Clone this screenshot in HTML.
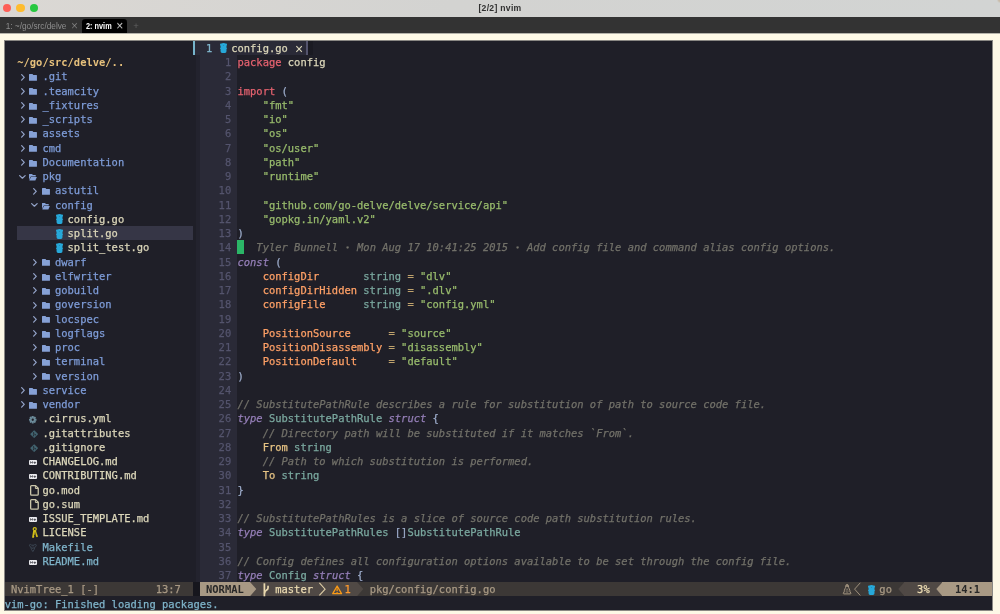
<!DOCTYPE html>
<html lang="en"><head><meta charset="utf-8"><title>[2/2] nvim</title>
<style>
html,body{margin:0;padding:0}
body{width:1000px;height:614px;overflow:hidden;position:relative;background:#fdf8e6;font-family:"Liberation Sans",sans-serif}
#titlebar{will-change:transform;position:absolute;left:0;top:0;width:1000px;height:17px;background:linear-gradient(90deg,#dbd8d4 0%,#d3d3d1 45%,#d2d4d3 100%)}
#title{position:absolute;left:0;right:0;top:2.6px;text-align:center;font-size:8.6px;font-weight:bold;color:#303030;line-height:11px;letter-spacing:0.3px}
#corner{position:absolute;right:0;top:0;width:4px;height:6px;background:radial-gradient(circle at 100% 0,#c9bba8 0,#c9bba8 1.2px,rgba(214,212,208,0) 3.2px)}
.light{position:absolute;top:3.6px;width:8.2px;height:8.2px;border-radius:50%}
#tabbar{will-change:transform;position:absolute;left:0;top:17px;width:1000px;height:16px;background:#333333;font-size:9px;line-height:16px;white-space:pre}
#tabbar span{position:absolute}
.tt{top:1.5px;font-size:8.25px}
.tx{top:1.1px;font-size:12px;margin-left:0.45px;font-weight:normal;-webkit-text-stroke:0.2px #333}
.tp{top:1.3px;font-size:9.6px;margin-left:0.3px}
#tab2{position:absolute;left:82px;top:2.2px;width:45.2px;height:13.8px;background:#000;border-radius:3.2px 3.2px 0 0}
#term{will-change:transform;position:absolute;left:4px;top:40px;width:989px;height:571px;box-sizing:border-box;border:1px solid #8a8884;background:#1f1f28;overflow:hidden;
 font-family:"DejaVu Sans Mono","Liberation Mono",monospace;font-size:10.45px;letter-spacing:0.009px;color:#dcd7ba}
#grid{position:absolute;left:-0.5px;top:-0.5px;width:988px;height:570px}
#sep{position:absolute;left:191.99px;top:14.25px;width:3.09px;height:527.25px;background:#23232e}
#gutter{position:absolute;left:195.08px;top:14.25px;width:37.76px;height:527.25px;background:#2a2a37}
.r{position:absolute;left:0;width:988px;height:14.25px;line-height:14.25px;white-space:pre}
.r span{position:absolute;top:0.4px;margin-left:0.15px;-webkit-text-stroke:0.25px}
.bg{position:absolute;top:0;height:14.3px;display:block}
.i{position:absolute;overflow:visible}
.fg{color:#dcd7ba} .dir{color:#7e9cd8} .sp{color:#7fb4ca}
.r span.root{color:#e7c17c;font-weight:bold;-webkit-text-stroke:0}
.ln{color:#54546d}
.pre{color:#e5626f} .br{color:#9cabca} .str{color:#98bb6c} .op{color:#c0a36e}
.kw{color:#957fb8;font-style:italic} .cm{color:#727169;font-style:italic}
.con{color:#ffa066} .ty{color:#7aa89f} .id{color:#e6c384}
.tabname{color:#dcd7ba}
.r span.bul{font-size:7px;font-style:normal;margin-left:1.2px;margin-top:0.2px}
.r span.close{font-family:"Liberation Sans",sans-serif;font-size:14px;letter-spacing:0;-webkit-text-stroke:0;margin-top:0.8px;margin-left:1.1px}
.st-a{color:#282828;font-weight:bold;-webkit-text-stroke:0 !important} .st-b{color:#ebdbb2} .st-c{color:#a89984} .st-w{color:#fe9a2e}
</style></head><body>
<div id="titlebar"><div class="light" style="left:3.1px;background:#fe5f57"></div><div class="light" style="left:16.4px;background:#febc2e"></div><div class="light" style="left:29.7px;background:#28c840"></div><div id="corner"></div><div id="title">[2/2] nvim</div></div>
<div id="tabbar"><div id="tab2"></div><span class="tt" style="left:5.7px;color:#8e8e8e">1: ~/go/src/delve</span><span class="tx" style="left:70.6px;color:#8e8e8e">×</span><span class="tt" style="left:85.9px;color:#fff;font-weight:bold;font-size:8.2px;top:1.5px;transform:scaleX(0.895);transform-origin:0 0">2: nvim</span><span class="tx" style="left:115.9px;color:#f0f0f0">×</span><span class="tp" style="left:132.9px;color:#606060">+</span></div>
<div style="position:absolute;left:0;top:33px;width:1000px;height:1px;background:#b4b2aa"></div>
<div id="term"><div id="grid"><div id="sep"></div><div id="gutter"></div>
<div class="r" style="top:0.0px"><b class="bg" style="left:188.79px;width:113.32px;background:#2a2a37"></b><b class="bg" style="left:188.49px;width:2px;background:#76b4cb"></b><span class="sp" style="left:201.38px">1 </span><svg class="i" style="left:215.06px;top:2.95px" width="7.05" height="10.10" viewBox="0 0 7 9.8" preserveAspectRatio="none"><g fill="#27a8d9"><circle cx="1" cy="1.6" r="1"/><circle cx="6" cy="1.6" r="1"/><path d="M0.55 3 Q0.5 0.1 3.5 0.05 Q6.5 0.1 6.45 3 L6.45 8 Q6.45 9.6 4.9 9.7 L2.1 9.7 Q0.55 9.6 0.55 8 Z"/><circle cx="0.5" cy="5.1" r="0.55"/><circle cx="6.5" cy="5.1" r="0.55"/></g><path d="M2.8 1.9 L4.2 1.9 L3.5 3 Z" fill="#1d86b0"/></svg><span class="tabname" style="left:226.55px">config.go </span><span class="fg close" style="left:289.48px">×</span><b class="bg" style="left:301.46px;width:1.8px;background:#54546d"></b><b class="bg" style="left:303.26px;width:5.09px;background:#1a1a22"></b></div>
<div class="r" style="top:14.25px"><span class="root" style="left:12.59px">~/go/src/delve/..</span><span class="ln" style="left:220.25px">1 </span><span class="pre" style="left:232.84px">package </span><span class="fg" style="left:283.18px">config</span></div>
<div class="r" style="top:28.5px"><svg class="i" style="left:16.09px;top:4.50px" width="4.00" height="6.70" viewBox="0 0 4 6.7" preserveAspectRatio="none"><path d="M0.65 0.6 L3.25 3.35 L0.65 6.1" fill="none" stroke="#93a3c8" stroke-width="1.25" stroke-linecap="round" stroke-linejoin="round"/></svg><svg class="i" style="left:24.87px;top:5.00px" width="7.95" height="6.85" viewBox="0 0 8 6.8" preserveAspectRatio="none"><path d="M0.4 0 H3.4 Q3.8 0 4 0.4 L4.3 1 H7.6 Q8 1 8 1.4 V6.4 Q8 6.8 7.6 6.8 H0.4 Q0 6.8 0 6.4 V0.4 Q0 0 0.4 0 Z" fill="#86a1d6"/></svg><span class="dir" style="left:37.76px">.git</span><span class="ln" style="left:220.25px">2 </span></div>
<div class="r" style="top:42.75px"><svg class="i" style="left:16.09px;top:4.50px" width="4.00" height="6.70" viewBox="0 0 4 6.7" preserveAspectRatio="none"><path d="M0.65 0.6 L3.25 3.35 L0.65 6.1" fill="none" stroke="#93a3c8" stroke-width="1.25" stroke-linecap="round" stroke-linejoin="round"/></svg><svg class="i" style="left:24.87px;top:5.00px" width="7.95" height="6.85" viewBox="0 0 8 6.8" preserveAspectRatio="none"><path d="M0.4 0 H3.4 Q3.8 0 4 0.4 L4.3 1 H7.6 Q8 1 8 1.4 V6.4 Q8 6.8 7.6 6.8 H0.4 Q0 6.8 0 6.4 V0.4 Q0 0 0.4 0 Z" fill="#86a1d6"/></svg><span class="dir" style="left:37.76px">.teamcity</span><span class="ln" style="left:220.25px">3 </span><span class="pre" style="left:232.84px">import </span><span class="br" style="left:276.89px">(</span></div>
<div class="r" style="top:57.0px"><svg class="i" style="left:16.09px;top:4.50px" width="4.00" height="6.70" viewBox="0 0 4 6.7" preserveAspectRatio="none"><path d="M0.65 0.6 L3.25 3.35 L0.65 6.1" fill="none" stroke="#93a3c8" stroke-width="1.25" stroke-linecap="round" stroke-linejoin="round"/></svg><svg class="i" style="left:24.87px;top:5.00px" width="7.95" height="6.85" viewBox="0 0 8 6.8" preserveAspectRatio="none"><path d="M0.4 0 H3.4 Q3.8 0 4 0.4 L4.3 1 H7.6 Q8 1 8 1.4 V6.4 Q8 6.8 7.6 6.8 H0.4 Q0 6.8 0 6.4 V0.4 Q0 0 0.4 0 Z" fill="#86a1d6"/></svg><span class="dir" style="left:37.76px">_fixtures</span><span class="ln" style="left:220.25px">4 </span><span class="str" style="left:258.01px">&quot;fmt&quot;</span></div>
<div class="r" style="top:71.25px"><svg class="i" style="left:16.09px;top:4.50px" width="4.00" height="6.70" viewBox="0 0 4 6.7" preserveAspectRatio="none"><path d="M0.65 0.6 L3.25 3.35 L0.65 6.1" fill="none" stroke="#93a3c8" stroke-width="1.25" stroke-linecap="round" stroke-linejoin="round"/></svg><svg class="i" style="left:24.87px;top:5.00px" width="7.95" height="6.85" viewBox="0 0 8 6.8" preserveAspectRatio="none"><path d="M0.4 0 H3.4 Q3.8 0 4 0.4 L4.3 1 H7.6 Q8 1 8 1.4 V6.4 Q8 6.8 7.6 6.8 H0.4 Q0 6.8 0 6.4 V0.4 Q0 0 0.4 0 Z" fill="#86a1d6"/></svg><span class="dir" style="left:37.76px">_scripts</span><span class="ln" style="left:220.25px">5 </span><span class="str" style="left:258.01px">&quot;io&quot;</span></div>
<div class="r" style="top:85.5px"><svg class="i" style="left:16.09px;top:4.50px" width="4.00" height="6.70" viewBox="0 0 4 6.7" preserveAspectRatio="none"><path d="M0.65 0.6 L3.25 3.35 L0.65 6.1" fill="none" stroke="#93a3c8" stroke-width="1.25" stroke-linecap="round" stroke-linejoin="round"/></svg><svg class="i" style="left:24.87px;top:5.00px" width="7.95" height="6.85" viewBox="0 0 8 6.8" preserveAspectRatio="none"><path d="M0.4 0 H3.4 Q3.8 0 4 0.4 L4.3 1 H7.6 Q8 1 8 1.4 V6.4 Q8 6.8 7.6 6.8 H0.4 Q0 6.8 0 6.4 V0.4 Q0 0 0.4 0 Z" fill="#86a1d6"/></svg><span class="dir" style="left:37.76px">assets</span><span class="ln" style="left:220.25px">6 </span><span class="str" style="left:258.01px">&quot;os&quot;</span></div>
<div class="r" style="top:99.75px"><svg class="i" style="left:16.09px;top:4.50px" width="4.00" height="6.70" viewBox="0 0 4 6.7" preserveAspectRatio="none"><path d="M0.65 0.6 L3.25 3.35 L0.65 6.1" fill="none" stroke="#93a3c8" stroke-width="1.25" stroke-linecap="round" stroke-linejoin="round"/></svg><svg class="i" style="left:24.87px;top:5.00px" width="7.95" height="6.85" viewBox="0 0 8 6.8" preserveAspectRatio="none"><path d="M0.4 0 H3.4 Q3.8 0 4 0.4 L4.3 1 H7.6 Q8 1 8 1.4 V6.4 Q8 6.8 7.6 6.8 H0.4 Q0 6.8 0 6.4 V0.4 Q0 0 0.4 0 Z" fill="#86a1d6"/></svg><span class="dir" style="left:37.76px">cmd</span><span class="ln" style="left:220.25px">7 </span><span class="str" style="left:258.01px">&quot;os/user&quot;</span></div>
<div class="r" style="top:114.0px"><svg class="i" style="left:16.09px;top:4.50px" width="4.00" height="6.70" viewBox="0 0 4 6.7" preserveAspectRatio="none"><path d="M0.65 0.6 L3.25 3.35 L0.65 6.1" fill="none" stroke="#93a3c8" stroke-width="1.25" stroke-linecap="round" stroke-linejoin="round"/></svg><svg class="i" style="left:24.87px;top:5.00px" width="7.95" height="6.85" viewBox="0 0 8 6.8" preserveAspectRatio="none"><path d="M0.4 0 H3.4 Q3.8 0 4 0.4 L4.3 1 H7.6 Q8 1 8 1.4 V6.4 Q8 6.8 7.6 6.8 H0.4 Q0 6.8 0 6.4 V0.4 Q0 0 0.4 0 Z" fill="#86a1d6"/></svg><span class="dir" style="left:37.76px">Documentation</span><span class="ln" style="left:220.25px">8 </span><span class="str" style="left:258.01px">&quot;path&quot;</span></div>
<div class="r" style="top:128.25px"><svg class="i" style="left:14.39px;top:5.80px" width="6.80" height="3.90" viewBox="0 0 6.8 3.9" preserveAspectRatio="none"><path d="M0.65 0.65 L3.4 3.2 L6.15 0.65" fill="none" stroke="#93a3c8" stroke-width="1.25" stroke-linecap="round" stroke-linejoin="round"/></svg><svg class="i" style="left:24.77px;top:5.55px" width="7.85" height="6.55" viewBox="0 0 8 6.5" preserveAspectRatio="none"><path d="M0.3 0 H3.2 L3.9 1 H6.6 Q6.9 1 6.9 1.3 V2.5 H2 Q1.6 2.5 1.4 2.9 L0 5.9 V0.3 Q0 0 0.3 0 Z" fill="#86a1d6"/><path d="M1.9 3 H8 L6.5 6.5 H0.3 Z" fill="#86a1d6"/></svg><span class="dir" style="left:37.76px">pkg</span><span class="ln" style="left:220.25px">9 </span><span class="str" style="left:258.01px">&quot;runtime&quot;</span></div>
<div class="r" style="top:142.5px"><svg class="i" style="left:28.67px;top:4.50px" width="4.00" height="6.70" viewBox="0 0 4 6.7" preserveAspectRatio="none"><path d="M0.65 0.6 L3.25 3.35 L0.65 6.1" fill="none" stroke="#93a3c8" stroke-width="1.25" stroke-linecap="round" stroke-linejoin="round"/></svg><svg class="i" style="left:37.46px;top:5.00px" width="7.95" height="6.85" viewBox="0 0 8 6.8" preserveAspectRatio="none"><path d="M0.4 0 H3.4 Q3.8 0 4 0.4 L4.3 1 H7.6 Q8 1 8 1.4 V6.4 Q8 6.8 7.6 6.8 H0.4 Q0 6.8 0 6.4 V0.4 Q0 0 0.4 0 Z" fill="#86a1d6"/></svg><span class="dir" style="left:50.34px">astutil</span><span class="ln" style="left:213.96px">10 </span></div>
<div class="r" style="top:156.75px"><svg class="i" style="left:26.97px;top:5.80px" width="6.80" height="3.90" viewBox="0 0 6.8 3.9" preserveAspectRatio="none"><path d="M0.65 0.65 L3.4 3.2 L6.15 0.65" fill="none" stroke="#93a3c8" stroke-width="1.25" stroke-linecap="round" stroke-linejoin="round"/></svg><svg class="i" style="left:37.36px;top:5.55px" width="7.85" height="6.55" viewBox="0 0 8 6.5" preserveAspectRatio="none"><path d="M0.3 0 H3.2 L3.9 1 H6.6 Q6.9 1 6.9 1.3 V2.5 H2 Q1.6 2.5 1.4 2.9 L0 5.9 V0.3 Q0 0 0.3 0 Z" fill="#86a1d6"/><path d="M1.9 3 H8 L6.5 6.5 H0.3 Z" fill="#86a1d6"/></svg><span class="dir" style="left:50.34px">config</span><span class="ln" style="left:213.96px">11 </span><span class="str" style="left:258.01px">&quot;github.com/go-delve/delve/service/api&quot;</span></div>
<div class="r" style="top:171.0px"><svg class="i" style="left:51.44px;top:2.75px" width="7.05" height="10.10" viewBox="0 0 7 9.8" preserveAspectRatio="none"><g fill="#27a8d9"><circle cx="1" cy="1.6" r="1"/><circle cx="6" cy="1.6" r="1"/><path d="M0.55 3 Q0.5 0.1 3.5 0.05 Q6.5 0.1 6.45 3 L6.45 8 Q6.45 9.6 4.9 9.7 L2.1 9.7 Q0.55 9.6 0.55 8 Z"/><circle cx="0.5" cy="5.1" r="0.55"/><circle cx="6.5" cy="5.1" r="0.55"/></g><path d="M2.8 1.9 L4.2 1.9 L3.5 3 Z" fill="#1d86b0"/></svg><span class="fg" style="left:62.93px">config.go</span><span class="ln" style="left:213.96px">12 </span><span class="str" style="left:258.01px">&quot;gopkg.in/yaml.v2&quot;</span></div>
<div class="r" style="top:185.25px"><b class="bg" style="left:12.59px;width:176.25px;background:#363646"></b><svg class="i" style="left:51.44px;top:2.75px" width="7.05" height="10.10" viewBox="0 0 7 9.8" preserveAspectRatio="none"><g fill="#27a8d9"><circle cx="1" cy="1.6" r="1"/><circle cx="6" cy="1.6" r="1"/><path d="M0.55 3 Q0.5 0.1 3.5 0.05 Q6.5 0.1 6.45 3 L6.45 8 Q6.45 9.6 4.9 9.7 L2.1 9.7 Q0.55 9.6 0.55 8 Z"/><circle cx="0.5" cy="5.1" r="0.55"/><circle cx="6.5" cy="5.1" r="0.55"/></g><path d="M2.8 1.9 L4.2 1.9 L3.5 3 Z" fill="#1d86b0"/></svg><span class="fg" style="left:62.93px">split.go</span><span class="ln" style="left:213.96px">13 </span><span class="br" style="left:232.84px">)</span></div>
<div class="r" style="top:199.5px"><svg class="i" style="left:51.44px;top:2.75px" width="7.05" height="10.10" viewBox="0 0 7 9.8" preserveAspectRatio="none"><g fill="#27a8d9"><circle cx="1" cy="1.6" r="1"/><circle cx="6" cy="1.6" r="1"/><path d="M0.55 3 Q0.5 0.1 3.5 0.05 Q6.5 0.1 6.45 3 L6.45 8 Q6.45 9.6 4.9 9.7 L2.1 9.7 Q0.55 9.6 0.55 8 Z"/><circle cx="0.5" cy="5.1" r="0.55"/><circle cx="6.5" cy="5.1" r="0.55"/></g><path d="M2.8 1.9 L4.2 1.9 L3.5 3 Z" fill="#1d86b0"/></svg><span class="fg" style="left:62.93px">split_test.go</span><span class="ln" style="left:213.96px">14 </span><span class="cm" style="left:251.72px">Tyler Bunnell </span><span class="cm bul" style="left:339.82px">•</span><span class="cm" style="left:346.11px"> Mon Aug 17 10:41:25 2015 </span><span class="cm bul" style="left:509.73px">•</span><span class="cm" style="left:516.03px"> Add config file and command alias config options.</span><b class="bg" style="left:232.84px;width:6.29px;background:#2bb667"></b></div>
<div class="r" style="top:213.75px"><svg class="i" style="left:28.67px;top:4.50px" width="4.00" height="6.70" viewBox="0 0 4 6.7" preserveAspectRatio="none"><path d="M0.65 0.6 L3.25 3.35 L0.65 6.1" fill="none" stroke="#93a3c8" stroke-width="1.25" stroke-linecap="round" stroke-linejoin="round"/></svg><svg class="i" style="left:37.46px;top:5.00px" width="7.95" height="6.85" viewBox="0 0 8 6.8" preserveAspectRatio="none"><path d="M0.4 0 H3.4 Q3.8 0 4 0.4 L4.3 1 H7.6 Q8 1 8 1.4 V6.4 Q8 6.8 7.6 6.8 H0.4 Q0 6.8 0 6.4 V0.4 Q0 0 0.4 0 Z" fill="#86a1d6"/></svg><span class="dir" style="left:50.34px">dwarf</span><span class="ln" style="left:213.96px">15 </span><span class="kw" style="left:232.84px">const </span><span class="br" style="left:270.6px">(</span></div>
<div class="r" style="top:228.0px"><svg class="i" style="left:28.67px;top:4.50px" width="4.00" height="6.70" viewBox="0 0 4 6.7" preserveAspectRatio="none"><path d="M0.65 0.6 L3.25 3.35 L0.65 6.1" fill="none" stroke="#93a3c8" stroke-width="1.25" stroke-linecap="round" stroke-linejoin="round"/></svg><svg class="i" style="left:37.46px;top:5.00px" width="7.95" height="6.85" viewBox="0 0 8 6.8" preserveAspectRatio="none"><path d="M0.4 0 H3.4 Q3.8 0 4 0.4 L4.3 1 H7.6 Q8 1 8 1.4 V6.4 Q8 6.8 7.6 6.8 H0.4 Q0 6.8 0 6.4 V0.4 Q0 0 0.4 0 Z" fill="#86a1d6"/></svg><span class="dir" style="left:50.34px">elfwriter</span><span class="ln" style="left:213.96px">16 </span><span class="con" style="left:258.01px">configDir       </span><span class="ty" style="left:358.7px">string </span><span class="op" style="left:402.75px">= </span><span class="str" style="left:415.34px">&quot;dlv&quot;</span></div>
<div class="r" style="top:242.25px"><svg class="i" style="left:28.67px;top:4.50px" width="4.00" height="6.70" viewBox="0 0 4 6.7" preserveAspectRatio="none"><path d="M0.65 0.6 L3.25 3.35 L0.65 6.1" fill="none" stroke="#93a3c8" stroke-width="1.25" stroke-linecap="round" stroke-linejoin="round"/></svg><svg class="i" style="left:37.46px;top:5.00px" width="7.95" height="6.85" viewBox="0 0 8 6.8" preserveAspectRatio="none"><path d="M0.4 0 H3.4 Q3.8 0 4 0.4 L4.3 1 H7.6 Q8 1 8 1.4 V6.4 Q8 6.8 7.6 6.8 H0.4 Q0 6.8 0 6.4 V0.4 Q0 0 0.4 0 Z" fill="#86a1d6"/></svg><span class="dir" style="left:50.34px">gobuild</span><span class="ln" style="left:213.96px">17 </span><span class="con" style="left:258.01px">configDirHidden </span><span class="ty" style="left:358.7px">string </span><span class="op" style="left:402.75px">= </span><span class="str" style="left:415.34px">&quot;.dlv&quot;</span></div>
<div class="r" style="top:256.5px"><svg class="i" style="left:28.67px;top:4.50px" width="4.00" height="6.70" viewBox="0 0 4 6.7" preserveAspectRatio="none"><path d="M0.65 0.6 L3.25 3.35 L0.65 6.1" fill="none" stroke="#93a3c8" stroke-width="1.25" stroke-linecap="round" stroke-linejoin="round"/></svg><svg class="i" style="left:37.46px;top:5.00px" width="7.95" height="6.85" viewBox="0 0 8 6.8" preserveAspectRatio="none"><path d="M0.4 0 H3.4 Q3.8 0 4 0.4 L4.3 1 H7.6 Q8 1 8 1.4 V6.4 Q8 6.8 7.6 6.8 H0.4 Q0 6.8 0 6.4 V0.4 Q0 0 0.4 0 Z" fill="#86a1d6"/></svg><span class="dir" style="left:50.34px">goversion</span><span class="ln" style="left:213.96px">18 </span><span class="con" style="left:258.01px">configFile      </span><span class="ty" style="left:358.7px">string </span><span class="op" style="left:402.75px">= </span><span class="str" style="left:415.34px">&quot;config.yml&quot;</span></div>
<div class="r" style="top:270.75px"><svg class="i" style="left:28.67px;top:4.50px" width="4.00" height="6.70" viewBox="0 0 4 6.7" preserveAspectRatio="none"><path d="M0.65 0.6 L3.25 3.35 L0.65 6.1" fill="none" stroke="#93a3c8" stroke-width="1.25" stroke-linecap="round" stroke-linejoin="round"/></svg><svg class="i" style="left:37.46px;top:5.00px" width="7.95" height="6.85" viewBox="0 0 8 6.8" preserveAspectRatio="none"><path d="M0.4 0 H3.4 Q3.8 0 4 0.4 L4.3 1 H7.6 Q8 1 8 1.4 V6.4 Q8 6.8 7.6 6.8 H0.4 Q0 6.8 0 6.4 V0.4 Q0 0 0.4 0 Z" fill="#86a1d6"/></svg><span class="dir" style="left:50.34px">locspec</span><span class="ln" style="left:213.96px">19 </span></div>
<div class="r" style="top:285.0px"><svg class="i" style="left:28.67px;top:4.50px" width="4.00" height="6.70" viewBox="0 0 4 6.7" preserveAspectRatio="none"><path d="M0.65 0.6 L3.25 3.35 L0.65 6.1" fill="none" stroke="#93a3c8" stroke-width="1.25" stroke-linecap="round" stroke-linejoin="round"/></svg><svg class="i" style="left:37.46px;top:5.00px" width="7.95" height="6.85" viewBox="0 0 8 6.8" preserveAspectRatio="none"><path d="M0.4 0 H3.4 Q3.8 0 4 0.4 L4.3 1 H7.6 Q8 1 8 1.4 V6.4 Q8 6.8 7.6 6.8 H0.4 Q0 6.8 0 6.4 V0.4 Q0 0 0.4 0 Z" fill="#86a1d6"/></svg><span class="dir" style="left:50.34px">logflags</span><span class="ln" style="left:213.96px">20 </span><span class="con" style="left:258.01px">PositionSource      </span><span class="op" style="left:383.87px">= </span><span class="str" style="left:396.46px">&quot;source&quot;</span></div>
<div class="r" style="top:299.25px"><svg class="i" style="left:28.67px;top:4.50px" width="4.00" height="6.70" viewBox="0 0 4 6.7" preserveAspectRatio="none"><path d="M0.65 0.6 L3.25 3.35 L0.65 6.1" fill="none" stroke="#93a3c8" stroke-width="1.25" stroke-linecap="round" stroke-linejoin="round"/></svg><svg class="i" style="left:37.46px;top:5.00px" width="7.95" height="6.85" viewBox="0 0 8 6.8" preserveAspectRatio="none"><path d="M0.4 0 H3.4 Q3.8 0 4 0.4 L4.3 1 H7.6 Q8 1 8 1.4 V6.4 Q8 6.8 7.6 6.8 H0.4 Q0 6.8 0 6.4 V0.4 Q0 0 0.4 0 Z" fill="#86a1d6"/></svg><span class="dir" style="left:50.34px">proc</span><span class="ln" style="left:213.96px">21 </span><span class="con" style="left:258.01px">PositionDisassembly </span><span class="op" style="left:383.87px">= </span><span class="str" style="left:396.46px">&quot;disassembly&quot;</span></div>
<div class="r" style="top:313.5px"><svg class="i" style="left:28.67px;top:4.50px" width="4.00" height="6.70" viewBox="0 0 4 6.7" preserveAspectRatio="none"><path d="M0.65 0.6 L3.25 3.35 L0.65 6.1" fill="none" stroke="#93a3c8" stroke-width="1.25" stroke-linecap="round" stroke-linejoin="round"/></svg><svg class="i" style="left:37.46px;top:5.00px" width="7.95" height="6.85" viewBox="0 0 8 6.8" preserveAspectRatio="none"><path d="M0.4 0 H3.4 Q3.8 0 4 0.4 L4.3 1 H7.6 Q8 1 8 1.4 V6.4 Q8 6.8 7.6 6.8 H0.4 Q0 6.8 0 6.4 V0.4 Q0 0 0.4 0 Z" fill="#86a1d6"/></svg><span class="dir" style="left:50.34px">terminal</span><span class="ln" style="left:213.96px">22 </span><span class="con" style="left:258.01px">PositionDefault     </span><span class="op" style="left:383.87px">= </span><span class="str" style="left:396.46px">&quot;default&quot;</span></div>
<div class="r" style="top:327.75px"><svg class="i" style="left:28.67px;top:4.50px" width="4.00" height="6.70" viewBox="0 0 4 6.7" preserveAspectRatio="none"><path d="M0.65 0.6 L3.25 3.35 L0.65 6.1" fill="none" stroke="#93a3c8" stroke-width="1.25" stroke-linecap="round" stroke-linejoin="round"/></svg><svg class="i" style="left:37.46px;top:5.00px" width="7.95" height="6.85" viewBox="0 0 8 6.8" preserveAspectRatio="none"><path d="M0.4 0 H3.4 Q3.8 0 4 0.4 L4.3 1 H7.6 Q8 1 8 1.4 V6.4 Q8 6.8 7.6 6.8 H0.4 Q0 6.8 0 6.4 V0.4 Q0 0 0.4 0 Z" fill="#86a1d6"/></svg><span class="dir" style="left:50.34px">version</span><span class="ln" style="left:213.96px">23 </span><span class="br" style="left:232.84px">)</span></div>
<div class="r" style="top:342.0px"><svg class="i" style="left:16.09px;top:4.50px" width="4.00" height="6.70" viewBox="0 0 4 6.7" preserveAspectRatio="none"><path d="M0.65 0.6 L3.25 3.35 L0.65 6.1" fill="none" stroke="#93a3c8" stroke-width="1.25" stroke-linecap="round" stroke-linejoin="round"/></svg><svg class="i" style="left:24.87px;top:5.00px" width="7.95" height="6.85" viewBox="0 0 8 6.8" preserveAspectRatio="none"><path d="M0.4 0 H3.4 Q3.8 0 4 0.4 L4.3 1 H7.6 Q8 1 8 1.4 V6.4 Q8 6.8 7.6 6.8 H0.4 Q0 6.8 0 6.4 V0.4 Q0 0 0.4 0 Z" fill="#86a1d6"/></svg><span class="dir" style="left:37.76px">service</span><span class="ln" style="left:213.96px">24 </span></div>
<div class="r" style="top:356.25px"><svg class="i" style="left:16.09px;top:4.50px" width="4.00" height="6.70" viewBox="0 0 4 6.7" preserveAspectRatio="none"><path d="M0.65 0.6 L3.25 3.35 L0.65 6.1" fill="none" stroke="#93a3c8" stroke-width="1.25" stroke-linecap="round" stroke-linejoin="round"/></svg><svg class="i" style="left:24.87px;top:5.00px" width="7.95" height="6.85" viewBox="0 0 8 6.8" preserveAspectRatio="none"><path d="M0.4 0 H3.4 Q3.8 0 4 0.4 L4.3 1 H7.6 Q8 1 8 1.4 V6.4 Q8 6.8 7.6 6.8 H0.4 Q0 6.8 0 6.4 V0.4 Q0 0 0.4 0 Z" fill="#86a1d6"/></svg><span class="dir" style="left:37.76px">vendor</span><span class="ln" style="left:213.96px">25 </span><span class="cm" style="left:232.84px">// SubstitutePathRule describes a rule for substitution of path to source code file.</span></div>
<div class="r" style="top:370.5px"><svg class="i" style="left:24.62px;top:4.85px" width="7.5" height="7.5" viewBox="-3.75 -3.75 7.5 7.5"><g fill="#6b8a99"><rect x="-0.95" y="-3.75" width="1.9" height="1.7" rx="0.25" transform="rotate(0)"/><rect x="-0.95" y="-3.75" width="1.9" height="1.7" rx="0.25" transform="rotate(45)"/><rect x="-0.95" y="-3.75" width="1.9" height="1.7" rx="0.25" transform="rotate(90)"/><rect x="-0.95" y="-3.75" width="1.9" height="1.7" rx="0.25" transform="rotate(135)"/><rect x="-0.95" y="-3.75" width="1.9" height="1.7" rx="0.25" transform="rotate(180)"/><rect x="-0.95" y="-3.75" width="1.9" height="1.7" rx="0.25" transform="rotate(225)"/><rect x="-0.95" y="-3.75" width="1.9" height="1.7" rx="0.25" transform="rotate(270)"/><rect x="-0.95" y="-3.75" width="1.9" height="1.7" rx="0.25" transform="rotate(315)"/><circle r="2.75"/></g><circle r="1.15" fill="#1f1f28"/></svg><span class="fg" style="left:37.76px">.cirrus.yml</span><span class="ln" style="left:213.96px">26 </span><span class="kw" style="left:232.84px">type </span><span class="ty" style="left:264.31px">SubstitutePathRule </span><span class="kw" style="left:383.87px">struct </span><span class="br" style="left:427.92px">{</span></div>
<div class="r" style="top:384.75px"><svg class="i" style="left:25.12px;top:4.85px" width="8.3" height="8.3" viewBox="-3.85 -3.85 7.7 7.7"><rect x="-2.65" y="-2.65" width="5.3" height="5.3" rx="0.45" transform="rotate(45)" fill="#41626e"/><path d="M-0.55 -1.3 V1.5 M-0.5 -0.5 L1.1 0.5" stroke="#1f1f28" stroke-width="0.5" fill="none"/><circle cx="-0.55" cy="1.5" r="0.55" fill="#1f1f28"/><circle cx="-0.55" cy="-1.3" r="0.55" fill="#1f1f28"/><circle cx="1.15" cy="0.55" r="0.55" fill="#1f1f28"/></svg><span class="fg" style="left:37.76px">.gitattributes</span><span class="ln" style="left:213.96px">27 </span><span class="cm" style="left:258.01px">// Directory path will be substituted if it matches `From`.</span></div>
<div class="r" style="top:399.0px"><svg class="i" style="left:25.12px;top:4.85px" width="8.3" height="8.3" viewBox="-3.85 -3.85 7.7 7.7"><rect x="-2.65" y="-2.65" width="5.3" height="5.3" rx="0.45" transform="rotate(45)" fill="#41626e"/><path d="M-0.55 -1.3 V1.5 M-0.5 -0.5 L1.1 0.5" stroke="#1f1f28" stroke-width="0.5" fill="none"/><circle cx="-0.55" cy="1.5" r="0.55" fill="#1f1f28"/><circle cx="-0.55" cy="-1.3" r="0.55" fill="#1f1f28"/><circle cx="1.15" cy="0.55" r="0.55" fill="#1f1f28"/></svg><span class="fg" style="left:37.76px">.gitignore</span><span class="ln" style="left:213.96px">28 </span><span class="id" style="left:258.01px">From </span><span class="ty" style="left:289.48px">string</span></div>
<div class="r" style="top:413.25px"><svg class="i" style="left:24.52px;top:6.20px" width="8.05" height="5.00" viewBox="0 0 8 5" preserveAspectRatio="none"><rect x="0" y="0" width="8" height="5" rx="1" fill="#ececf0"/><path d="M1.45 3.5 V1.6 L2.45 2.7 L3.45 1.6 V3.5" fill="none" stroke="#33333c" stroke-width="0.7" stroke-linejoin="round"/><path d="M5.75 1.5 V2.7 M4.75 2.5 L5.75 3.6 L6.75 2.5 Z" fill="#33333c" stroke="#33333c" stroke-width="0.6"/></svg><span class="fg" style="left:37.76px">CHANGELOG.md</span><span class="ln" style="left:213.96px">29 </span><span class="cm" style="left:258.01px">// Path to which substitution is performed.</span></div>
<div class="r" style="top:427.5px"><svg class="i" style="left:24.52px;top:6.20px" width="8.05" height="5.00" viewBox="0 0 8 5" preserveAspectRatio="none"><rect x="0" y="0" width="8" height="5" rx="1" fill="#ececf0"/><path d="M1.45 3.5 V1.6 L2.45 2.7 L3.45 1.6 V3.5" fill="none" stroke="#33333c" stroke-width="0.7" stroke-linejoin="round"/><path d="M5.75 1.5 V2.7 M4.75 2.5 L5.75 3.6 L6.75 2.5 Z" fill="#33333c" stroke="#33333c" stroke-width="0.6"/></svg><span class="fg" style="left:37.76px">CONTRIBUTING.md</span><span class="ln" style="left:213.96px">30 </span><span class="id" style="left:258.01px">To </span><span class="ty" style="left:276.89px">string</span></div>
<div class="r" style="top:441.75px"><svg class="i" style="left:25.72px;top:2.35px" width="8.90" height="10.80" viewBox="0 0 8.9 10.8" preserveAspectRatio="none"><path d="M1.6 0.65 H5.6 L8.25 3.3 V9.2 Q8.25 10.15 7.3 10.15 H1.6 Q0.65 10.15 0.65 9.2 V1.6 Q0.65 0.65 1.6 0.65 Z" fill="none" stroke="#cbc6aa" stroke-width="1.3" stroke-linejoin="round"/><path d="M5.4 0.9 V3.5 H8" fill="none" stroke="#cbc6aa" stroke-width="1"/></svg><span class="fg" style="left:37.76px">go.mod</span><span class="ln" style="left:213.96px">31 </span><span class="br" style="left:232.84px">}</span></div>
<div class="r" style="top:456.0px"><svg class="i" style="left:25.72px;top:2.35px" width="8.90" height="10.80" viewBox="0 0 8.9 10.8" preserveAspectRatio="none"><path d="M1.6 0.65 H5.6 L8.25 3.3 V9.2 Q8.25 10.15 7.3 10.15 H1.6 Q0.65 10.15 0.65 9.2 V1.6 Q0.65 0.65 1.6 0.65 Z" fill="none" stroke="#cbc6aa" stroke-width="1.3" stroke-linejoin="round"/><path d="M5.4 0.9 V3.5 H8" fill="none" stroke="#cbc6aa" stroke-width="1"/></svg><span class="fg" style="left:37.76px">go.sum</span><span class="ln" style="left:213.96px">32 </span></div>
<div class="r" style="top:470.25px"><svg class="i" style="left:24.52px;top:6.20px" width="8.05" height="5.00" viewBox="0 0 8 5" preserveAspectRatio="none"><rect x="0" y="0" width="8" height="5" rx="1" fill="#ececf0"/><path d="M1.45 3.5 V1.6 L2.45 2.7 L3.45 1.6 V3.5" fill="none" stroke="#33333c" stroke-width="0.7" stroke-linejoin="round"/><path d="M5.75 1.5 V2.7 M4.75 2.5 L5.75 3.6 L6.75 2.5 Z" fill="#33333c" stroke="#33333c" stroke-width="0.6"/></svg><span class="fg" style="left:37.76px">ISSUE_TEMPLATE.md</span><span class="ln" style="left:213.96px">33 </span><span class="cm" style="left:232.84px">// SubstitutePathRules is a slice of source code path substitution rules.</span></div>
<div class="r" style="top:484.5px"><svg class="i" style="left:27.37px;top:2.10px" width="6.10" height="10.90" viewBox="0 0 6.1 10.9" preserveAspectRatio="none"><circle cx="2.75" cy="2.1" r="1.55" fill="none" stroke="#d3bf18" stroke-width="1.2"/><path d="M1.2 3.4 L0.1 10.2 Q0.1 10.8 0.8 10.8 L2 10.7 L2.3 9.4 L1.9 8.6 L2.5 8 L3 4.6 L4 9.6 L4.9 10.3 L6 9.8 L5.5 8.7 L5.8 8 L5.1 7.5 L4 3.4 Z" fill="#d3bf18"/></svg><span class="fg" style="left:37.76px">LICENSE</span><span class="ln" style="left:213.96px">34 </span><span class="kw" style="left:232.84px">type </span><span class="ty" style="left:264.31px">SubstitutePathRules </span><span class="br" style="left:390.17px">[]</span><span class="ty" style="left:402.75px">SubstitutePathRule</span></div>
<div class="r" style="top:498.75px"><svg class="i" style="left:24.57px;top:4.80px" width="7.70" height="8.00" viewBox="0 0 7.7 8" preserveAspectRatio="none"><path d="M0.5 1.9 Q0.1 0.4 1.5 0.4 Q2.4 0.5 2.7 1.3 Q3.85 0.9 5 1.3 Q5.3 0.5 6.2 0.4 Q7.6 0.4 7.2 1.9 Q6.8 2.9 5.9 2.9 Q5.7 5.4 3.85 7.6 Q2 5.4 1.8 2.9 Q0.9 2.9 0.5 1.9 Z" fill="none" stroke="#3b4551" stroke-width="0.95"/><path d="M2.7 3 L3.85 5 L5 3 M2.5 1.9 H5.2" fill="none" stroke="#3b4551" stroke-width="0.7"/></svg><span class="sp" style="left:37.76px">Makefile</span><span class="ln" style="left:213.96px">35 </span></div>
<div class="r" style="top:513.0px"><svg class="i" style="left:24.52px;top:6.20px" width="8.05" height="5.00" viewBox="0 0 8 5" preserveAspectRatio="none"><rect x="0" y="0" width="8" height="5" rx="1" fill="#ececf0"/><path d="M1.45 3.5 V1.6 L2.45 2.7 L3.45 1.6 V3.5" fill="none" stroke="#33333c" stroke-width="0.7" stroke-linejoin="round"/><path d="M5.75 1.5 V2.7 M4.75 2.5 L5.75 3.6 L6.75 2.5 Z" fill="#33333c" stroke="#33333c" stroke-width="0.6"/></svg><span class="sp" style="left:37.76px">README.md</span><span class="ln" style="left:213.96px">36 </span><span class="cm" style="left:232.84px">// Config defines all configuration options available to be set through the config file.</span></div>
<div class="r" style="top:527.25px"><span class="ln" style="left:213.96px">37 </span><span class="kw" style="left:232.84px">type </span><span class="ty" style="left:264.31px">Config </span><span class="kw" style="left:308.36px">struct </span><span class="br" style="left:352.41px">{</span></div>
<div class="r" style="top:541.5px"><b class="bg" style="left:0.0px;width:188.84px;background:#3c3836"></b><b class="bg" style="left:188.79px;width:6.34px;background:#16161d"></b><span class="st-c" style="left:6.29px">NvimTree_1 [-] </span><span class="st-c" style="left:151.03px">13:7 </span><b class="bg" style="left:195.08px;width:50.39px;background:#a89984"></b><span class="st-a" style="left:201.38px">NORMAL </span><b class="bg" style="left:245.43px;width:107.03px;background:#504945"></b><svg class="i" style="left:245.43px;top:0.00px" width="6.592993630573249" height="14.25" viewBox="0 0 6.593 14.25" ><path d="M0 0 L6.293 7.125 L0 14.25 Z" fill="#a89984"/></svg><svg class="i" style="left:258.01px;top:0.60px" width="6.40" height="13.50" viewBox="0 0 6.4 13.5" preserveAspectRatio="none"><path d="M1.4 0.3 V13.3" fill="none" stroke="#e9d9af" stroke-width="1.75"/><path d="M5.05 3.3 V5 Q5.05 6.4 3.4 7.3 Q1.7 8.2 1.6 10" fill="none" stroke="#e9d9af" stroke-width="1.7" stroke-linecap="round"/></svg><span class="st-b" style="left:270.6px">master </span><svg class="i" style="left:314.65px;top:0.00px" width="6.692993630573249" height="14.25" viewBox="0 0 6.693 14.25" ><path d="M0.4 0.8 L6.093 7.125 L0.4 13.45" fill="none" stroke="#dccba4" stroke-width="1.1"/></svg><svg class="i" style="left:327.44px;top:3.20px" width="10.30" height="9.35" viewBox="0 0 10.3 9.35" preserveAspectRatio="none"><path d="M5.15 0.95 L9.55 8.65 H0.75 Z" fill="none" stroke="#f99a16" stroke-width="1.3" stroke-linejoin="round"/><path d="M5.15 3.3 V6.1" stroke="#e08c1c" stroke-width="1.5"/><circle cx="5.15" cy="7.4" r="0.75" fill="#e08c1c"/></svg><span class="st-w" style="left:339.82px">1 </span><b class="bg" style="left:352.41px;width:547.54px;background:#3c3836"></b><svg class="i" style="left:352.41px;top:0.00px" width="6.592993630573249" height="14.25" viewBox="0 0 6.593 14.25" ><path d="M0 0 L6.293 7.125 L0 14.25 Z" fill="#504945"/></svg><span class="st-c" style="left:364.99px">pkg/config/config.go </span><svg class="i" style="left:838.17px;top:2.20px" width="8.20" height="10.40" viewBox="0 0 8.2 10.4" preserveAspectRatio="none"><path d="M4.1 0.5 Q5.4 0.5 5.4 2 Q5.4 3.4 6.2 4.8 Q7 6.4 7 7.8 L7.9 9.3 Q7.9 9.9 7.3 9.9 L0.9 9.9 Q0.3 9.9 0.3 9.3 L1.2 7.8 Q1.2 6.4 2 4.8 Q2.8 3.4 2.8 2 Q2.8 0.5 4.1 0.5 Z" fill="none" stroke="#a89984" stroke-width="1" stroke-linejoin="round"/><path d="M4.1 4.6 Q5.3 6.2 5 8.2 Q4.1 8.7 3.2 8.2 Q2.9 6.2 4.1 4.6 Z" fill="none" stroke="#a89984" stroke-width="0.5"/><circle cx="4.1" cy="1.9" r="1" fill="#a89984"/></svg><svg class="i" style="left:849.55px;top:0.00px" width="6.692993630573249" height="14.25" viewBox="0 0 6.693 14.25" ><path d="M6.293 0.8 L0.6 7.125 L6.293 13.45" fill="none" stroke="#a89984" stroke-width="0.9"/></svg><svg class="i" style="left:863.24px;top:2.75px" width="7.05" height="10.10" viewBox="0 0 7 9.8" preserveAspectRatio="none"><g fill="#27a8d9"><circle cx="1" cy="1.6" r="1"/><circle cx="6" cy="1.6" r="1"/><path d="M0.55 3 Q0.5 0.1 3.5 0.05 Q6.5 0.1 6.45 3 L6.45 8 Q6.45 9.6 4.9 9.7 L2.1 9.7 Q0.55 9.6 0.55 8 Z"/><circle cx="0.5" cy="5.1" r="0.55"/><circle cx="6.5" cy="5.1" r="0.55"/></g><path d="M2.8 1.9 L4.2 1.9 L3.5 3 Z" fill="#1d86b0"/></svg><span class="st-c" style="left:874.73px">go </span><b class="bg" style="left:899.9px;width:37.81px;background:#504945"></b><svg class="i" style="left:893.31px;top:0.00px" width="6.592993630573249" height="14.25" viewBox="0 0 6.593 14.25" ><path d="M6.593 0 L0.3 7.125 L6.593 14.25 Z" fill="#504945"/></svg><span class="st-b" style="left:912.48px">3% </span><b class="bg" style="left:937.66px;width:50.39px;background:#a89984"></b><svg class="i" style="left:931.06px;top:0.00px" width="6.592993630573249" height="14.25" viewBox="0 0 6.593 14.25" ><path d="M6.593 0 L0.3 7.125 L6.593 14.25 Z" fill="#a89984"/></svg><span class="st-a" style="left:950.24px">14:1</span></div>
<div class="r" style="top:555.75px"><span class="sp" style="left:0.0px">vim-go: Finished loading packages.</span></div>
</div></div></body></html>
